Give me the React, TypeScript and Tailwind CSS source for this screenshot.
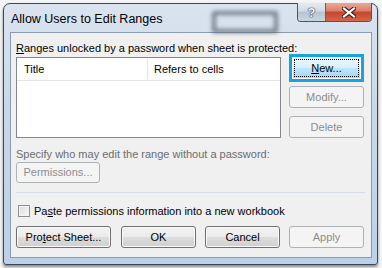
import React from 'react';

const font = { fontFamily: '"Liberation Sans", Arial, sans-serif' };

function Btn({
  children,
  disabled,
  className = '',
}: {
  children: React.ReactNode;
  disabled?: boolean;
  className?: string;
}) {
  return (
    <div
      className={`flex items-center justify-center rounded-[3px] border text-[11px] ${
        disabled
          ? 'border-[#adb2b5] bg-[#f4f4f4] text-[#8d8d8d]'
          : 'border-[#707070] bg-[linear-gradient(#f2f2f2,#ebebeb_50%,#dddddd_50%,#cfcfcf)] text-black shadow-[inset_0_0_0_1px_#fbfbfb]'
      } ${className}`}
    >
      {children}
    </div>
  );
}

export default function App() {
  return (
    <div className="relative h-[268px] w-[382px] overflow-hidden bg-[#f3f4f5]" style={font}>
      {/* window */}
      <div className="ml-[3px] mt-[3px] flex h-[262px] w-[375px] flex-col rounded-t-[7px] rounded-b-[3px] border border-[#3d4752] bg-[linear-gradient(#dae4ef,#c9d8e8_40%,#bad1e9)] shadow-[0_2px_3px_rgba(0,0,0,0.45)]">
        {/* title bar */}
        <div className="relative flex h-[28px] shrink-0 items-start justify-between">
          <div className="pl-[7px] pt-[7px] text-[12.5px] leading-[16px] text-black">Allow Users to Edit Ranges</div>
          <div className="absolute left-[208px] top-[7px] h-[22px] w-[66px] rounded-[2px] border-[4px] border-[#4b5561] opacity-70 blur-[2px]" />
          <div className="mr-[5px] mt-[-1px] flex h-[19px] overflow-hidden rounded-b-[4px] border border-t-0 border-[#4a5563]">
            <div className="flex w-[28px] items-center justify-center border-r border-[#5a6470] bg-[linear-gradient(#e4eaf1,#d1dbe6_45%,#b6c4d3_50%,#c9d5e1)]">
              <span className="text-[13px] font-bold leading-none text-[#f4f6f8] [text-shadow:0_0_1px_#2c3440,0_0_1px_#2c3440,0_0_1px_#2c3440]">?</span>
            </div>
            <div className="flex w-[45px] items-center justify-center bg-[linear-gradient(#eaa999,#dc7d69_45%,#c6442d_50%,#d2664c)]">
              <svg width="14" height="11" viewBox="0 0 14 11">
                <path d="M2 1.5 L12 9.5 M12 1.5 L2 9.5" stroke="#3a1a14" strokeWidth="4.2" strokeLinecap="square" />
                <path d="M2 1.5 L12 9.5 M12 1.5 L2 9.5" stroke="#ffffff" strokeWidth="2.2" strokeLinecap="square" />
              </svg>
            </div>
          </div>
        </div>

        {/* content panel */}
        <div className="ml-[6px] flex h-[226px] w-[362px] flex-col border border-[#8a9bb0] bg-[#f0f0f0] px-[5px]">
          <div className="mt-[7px] h-[16px] whitespace-nowrap text-[11px] leading-[16px] text-black">
            <span className="underline">R</span>anges unlocked by a password when sheet is protected:
          </div>
          <div className="mt-[1px] flex">
            <div className="h-[81px] w-[265px] border border-[#828790] bg-white">
              <div className="flex h-[23px] border-b border-[#e5e5e5] text-[11px] leading-[22px] text-black">
                <div className="w-[131px] border-r border-[#e5e5e5] pl-[7px]">Title</div>
                <div className="pl-[6px]">Refers to cells</div>
              </div>
            </div>
            <div className="ml-[8px] mt-[-3px] flex flex-col">
              <div className="h-[28px] w-[75px] border-[3px] border-[#19a2e0] bg-white p-px">
                <div className="flex h-full items-center justify-center bg-[linear-gradient(#eaf6fd,#d9f0fc_50%,#bee6fd_50%,#a7d9f5)] text-[11px] text-black outline-1 -outline-offset-2 outline-black outline-dotted">
                  <span>
                    <span className="underline">N</span>ew...
                  </span>
                </div>
              </div>
              <Btn disabled className="mt-[4px] h-[22px] w-[75px]">
                Modify...
              </Btn>
              <Btn disabled className="mt-[8px] h-[22px] w-[75px]">
                Delete
              </Btn>
            </div>
          </div>

          <div className="mt-[8px] h-[16px] text-[11px] leading-[16px] text-[#6d6d6d]">
            Specify who may edit the range without a password:
          </div>
          <Btn disabled className="h-[21px] w-[84px]">
            Permissions...
          </Btn>

          <div className="mt-[9px] h-px w-[349px] bg-[#d7dde4]" />

          <div className="mt-[10px] flex h-[16px] items-center">
            <div className="ml-[2px] h-[12px] w-[12px] border border-[#8f8f8f] bg-[linear-gradient(135deg,#dcdcdc,#f8f8f8)] shadow-[inset_0_0_0_1px_#f4f4f4]" />
            <div className="ml-[4px] text-[11px] leading-[16px] text-black">
              Pa<span className="underline">s</span>te permissions information into a new workbook
            </div>
          </div>

          <div className="mt-[7px] flex">
            <Btn className="h-[22px] w-[95px]">
              <span>
                Pro<span className="underline">t</span>ect Sheet...
              </span>
            </Btn>
            <Btn className="ml-[10px] h-[22px] w-[75px]">OK</Btn>
            <Btn className="ml-[9px] h-[22px] w-[75px]">Cancel</Btn>
            <Btn disabled className="ml-[9px] h-[22px] w-[75px]">
              Apply
            </Btn>
          </div>
        </div>
      </div>
    </div>
  );
}
